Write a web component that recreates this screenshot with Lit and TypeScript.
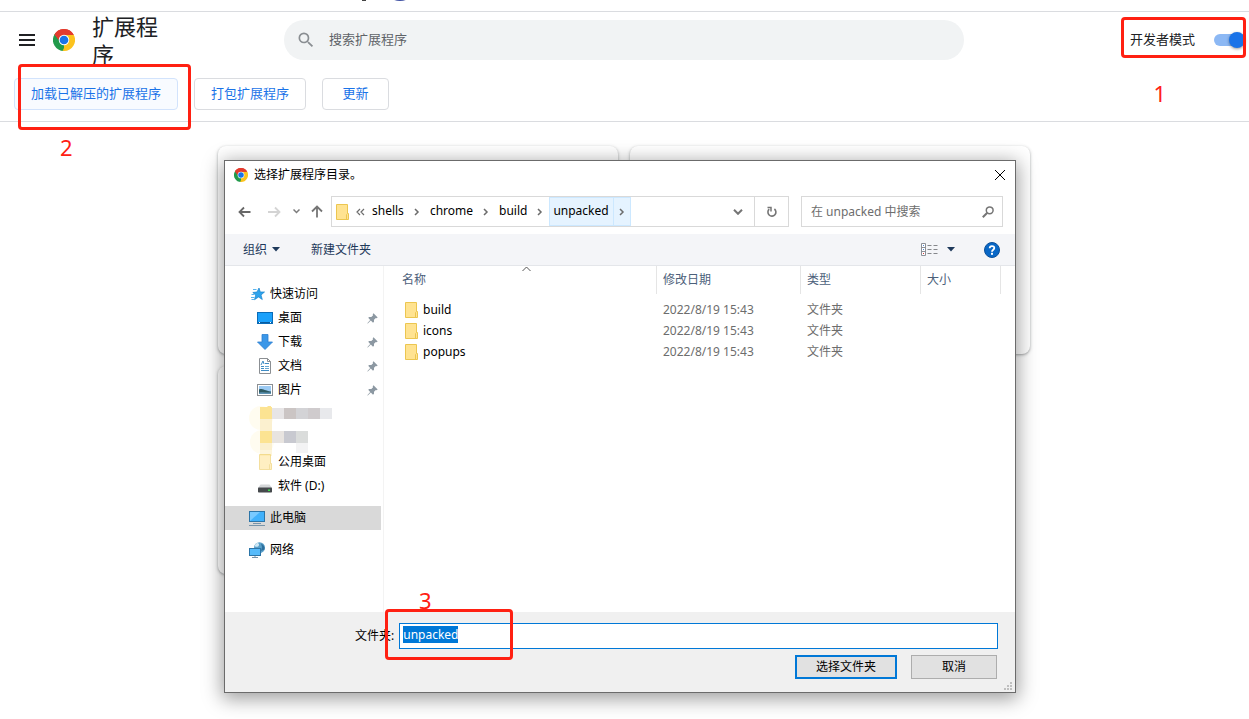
import { LitElement, html, css, svg } from "lit";
import { customElement, property, query } from "lit/decorators.js";
import { classMap } from "lit/directives/class-map.js";

const chromeLogo = (size: number) => html`
  <svg class="logo" width=${size} height=${size} viewBox="0 0 48 48" aria-hidden="true">
    <path d="M24 24 3.2 12A24 24 0 0 1 44.8 12Z" fill="#e33b2e" />
    <path d="M24 24 44.8 12A24 24 0 0 1 24 48Z" fill="#fcc31e" />
    <path d="M24 24 24 48A24 24 0 0 1 3.2 12Z" fill="#219a4b" />
    <path d="M24 13H44.8L46 16 34 27Z" fill="#fcc31e" />
    <path d="M3.2 12 14.5 29.5 24 24 15 13 6 8.500Z" fill="#219a4b" />
    <path d="M33.500 29.500 24 48 21 47.500 28 34Z" fill="#fcc31e" />
    <path d="M3.200 12A24 24 0 0 1 44.800 12L45.300 13H24L14.500 18.500 12 24Z" fill="#e33b2e" />
    <circle cx="24" cy="24" r="11.500" fill="#fff" />
    <circle cx="24" cy="24" r="9.500" fill="#1a73e8" />
  </svg>`;

const folder = (pale = false) => html`
  <svg width="13" height="16" viewBox="0 0 13 16" aria-hidden="true" opacity=${pale ? 0.55 : 1}>
    <path d="M.5.5H11.500V9.500H12.500V15.500H.5Z" fill="#ffe391" stroke="#ecc650" />
    <path d="M10.500 15V10.500L11.500 9.500" stroke="#ecc650" fill="none" />
  </svg>`;

const chevron = html`
  <svg width="6" height="8" viewBox="0 0 6 8" aria-hidden="true">
    <path d="M1 1 4 4 1 7" fill="none" stroke="#6c6c6c" stroke-width="1.500" />
  </svg>`;

const triangle = html`
  <svg width="8" height="5" viewBox="0 0 8 5" aria-hidden="true"><path d="M0 0H8L4 4.500Z" fill="#1e395b" /></svg>`;

const icons: Record<string, unknown> = {
  star: svg`<path d="M10 2 11.300 6 15.500 6 12 9 13.300 13.500 9.500 11 5.500 13.700 6.700 9.200 3.800 6.500 8 6Z" fill="#2ea3ec" stroke="#1583cd" stroke-width=".7"/><path d="M4 3.500H7.500M2.500 8.500H5M2 11.500H5.500M2.500 13.500H5" stroke="#58b4ef" stroke-width="1"/>`,
  desktop: svg`<rect x=".5" y="2.500" width="15" height="11" fill="#1ba1fb" stroke="#0a6cb8"/><path d="M1 12.500H15" stroke="#085b9f"/><path d="M2 12.500H3M13 12.500H14" stroke="#fff"/>`,
  download: svg`<path d="M5 .5H11V8H15.500L8 15.500.5 8H5Z" fill="#3b97e8" stroke="#2b7fd0" stroke-width=".8"/>`,
  document: svg`<path d="M2.500.5H10.500L13.500 3.500V15.500H2.500Z" fill="#fff" stroke="#8b8f93"/><path d="M10.500.5V3.500H13.500" fill="none" stroke="#8b8f93"/><path d="M4 7 6 3 7 6M8 5.500H12M4 8.500H7M4 10.500H7M4 12.500H12" fill="none" stroke="#3f8cc4"/><path d="M8 8.500H12M8 10.500H12" stroke="#68a8d2"/>`,
  picture: svg`<rect x=".5" y="2.500" width="15" height="11" fill="#fff" stroke="#8b8f93"/><rect x="2" y="4" width="12" height="8" fill="#9ccbf4"/><path d="M2 7.500C5 6 7 8.500 14 9.500V12H2Z" fill="#2f5b63"/><path d="M2 10.800C6 9.500 9 11 14 10.500V12H2Z" fill="#5e93b4"/>`,
  drive: svg`<path d="M3.500 6.500H12.500L15 10H1Z" fill="#d4d6d8"/><rect x="1" y="9.500" width="14" height="5" rx=".8" fill="#45494c"/><rect x="11" y="11.500" width="2" height="1.500" fill="#39e04d"/>`,
  computer: svg`<rect x=".5" y="1.500" width="15" height="10" fill="#41b1fb" stroke="#2c75a8"/><path d="M1 11 11 2H1Z" fill="#79caff"/><path d="M4 13.500H12M0 15.500H16" stroke="#7794aa"/>`,
  network: svg`<circle cx="10.500" cy="5.700" r="5.500" fill="#5aa0c9"/><path d="M8 1C10 1 11 3 9 4.500 7 5.500 6 4 5.500 4 6 2.500 7 1.500 8 1Z" fill="#cfe8f5"/><path d="M12 1.500C15 3 16 5 15.500 7.500L12 9 13 5Z" fill="#2d6f9d"/><rect x=".5" y="6.500" width="11" height="7" fill="#56bbfb" stroke="#2c75a8"/><path d="M3 15.500H9M6 14V15" stroke="#7794aa"/>`,
};

interface Place {
  label: string;
  icon: string;
  root?: boolean;
  pinned?: boolean;
  selected?: boolean;
}

const quickPlaces: Place[] = [
  { label: "快速访问", icon: "star", root: true },
  { label: "桌面", icon: "desktop", pinned: true },
  { label: "下载", icon: "download", pinned: true },
  { label: "文档", icon: "document", pinned: true },
  { label: "图片", icon: "picture", pinned: true },
];

const otherPlaces: Place[] = [
  { label: "公用桌面", icon: "folder" },
  { label: "软件 (D:)", icon: "drive" },
  { label: "此电脑", icon: "computer", root: true, selected: true },
  { label: "网络", icon: "network", root: true },
];

const base = css`
  * {
    box-sizing: border-box;
  }
  button,
  input {
    font: inherit;
    color: inherit;
    margin: 0;
    outline: none;
  }
  button {
    padding: 0;
    border: 0;
    background: none;
    white-space: nowrap;
  }
  svg {
    display: block;
    flex: none;
  }
`;

@customElement("folder-picker")
export class FolderPicker extends LitElement {
  @property({ type: Array }) path = ["shells", "chrome", "build", "unpacked"];
  @property({ type: Array }) folders = ["build", "icons", "popups"];
  @query("#folder") folderInput!: HTMLInputElement;

  static styles = [
    base,
    css`
      :host {
        display: flex;
        flex-direction: column;
        border: 1px solid #6b6b6b;
        background: #fff;
        box-shadow: 0 4px 18px 2px rgba(0, 0, 0, 0.38);
        font-size: 12px;
        line-height: 16px;
        color: #000;
      }
      .title-bar {
        display: flex;
        align-items: center;
        gap: 6px;
        height: 28px;
        padding: 0 10px 0 9px;
      }
      .title {
        flex: 1;
        font: inherit;
        margin: 0;
      }
      .nav {
        display: flex;
        gap: 12px;
        padding: 7px 12px 7px 13px;
      }
      .arrows {
        display: flex;
        align-items: center;
        gap: 11px;
        width: 81px;
      }
      .address {
        flex: 1;
        display: flex;
        height: 31px;
        border: 1px solid #d9d9d9;
      }
      .location {
        display: flex;
        align-items: center;
        flex: 1;
        padding-left: 4px;
      }
      .more {
        width: 19px;
        padding-left: 7px;
      }
      .crumb {
        display: flex;
        height: 29px;
      }
      .crumb button {
        display: flex;
        align-items: center;
        padding: 0 4px 2px;
      }
      .crumb .next {
        width: 18px;
        padding: 0;
        justify-content: center;
      }
      .crumb.current {
        background: #e5f3ff;
        box-shadow: inset 0 0 0 1px #cce8ff;
      }
      .crumb.current .next {
        border-left: 1px solid #cce8ff;
      }
      .drop {
        display: flex;
        margin-left: auto;
        padding: 0 11px;
      }
      .refresh {
        display: flex;
        align-items: center;
        justify-content: center;
        width: 34px;
        border-left: 1px solid #d9d9d9;
      }
      .search {
        display: flex;
        align-items: center;
        width: 202px;
        padding: 0 8px 0 9px;
        border: 1px solid #d9d9d9;
      }
      .search input {
        flex: 1;
        min-width: 0;
        border: 0;
        padding: 0;
        background: none;
      }
      .search input::placeholder {
        color: #6d6d6d;
        opacity: 1;
      }
      .commands {
        display: flex;
        align-items: center;
        height: 32px;
        padding: 0 15px 0 18px;
        background: #f4f5f8;
        border-bottom: 1px solid #e4e6ea;
        color: #1e395b;
      }
      .commands button {
        display: flex;
        align-items: center;
        gap: 5px;
      }
      .commands .create {
        margin-left: 31px;
      }
      .commands .view {
        margin-left: auto;
        gap: 9px;
      }
      .commands .help {
        margin-left: 29px;
      }
      .content {
        display: flex;
        flex: 1;
      }
      .places {
        width: 159px;
        padding: 16px 2px 0 0;
        border-right: 1px solid #f3f3f3;
      }
      .place {
        display: flex;
        align-items: center;
        gap: 5px;
        width: 100%;
        height: 24px;
        padding: 0 3px 0 32px;
      }
      .place.root {
        padding-left: 24px;
      }
      .place.selected {
        background: #d9d9d9;
      }
      .place.spaced {
        margin-top: 8px;
      }
      .place .icon {
        display: flex;
        justify-content: center;
        width: 16px;
      }
      .place .pin {
        margin-left: auto;
      }
      .hidden-places {
        height: 48px;
        padding-left: 24px;
      }
      .hidden-places svg {
        overflow: visible;
      }
      .files {
        flex: 1;
      }
      table {
        width: 100%;
        border-collapse: separate;
        border-spacing: 0;
        table-layout: fixed;
      }
      th {
        position: relative;
        height: 28px;
        padding: 0 0 0 6px;
        border-right: 1px solid #e5e5e5;
        font-weight: 400;
        text-align: left;
        color: #4c607a;
      }
      th:first-child {
        padding-left: 18px;
      }
      th:last-child {
        border: 0;
      }
      .sort {
        position: absolute;
        top: 0;
        right: 125px;
      }
      .name-col {
        width: 273px;
      }
      .date-col {
        width: 144px;
      }
      .type-col {
        width: 120px;
      }
      .size-col {
        width: 80px;
      }
      tbody::before {
        content: "";
        display: block;
        height: 5px;
      }
      td {
        height: 21px;
        padding: 0 0 0 6px;
        color: #6d6d6d;
      }
      td.name {
        padding-left: 21px;
        color: #000;
      }
      .entry {
        display: flex;
        align-items: center;
        gap: 5px;
      }
      .footer {
        position: relative;
        display: flex;
        flex-direction: column;
        gap: 6px;
        height: 80px;
        padding: 11px 17px 0 130px;
        background: #f0f0f0;
      }
      .field {
        display: flex;
        align-items: center;
        gap: 5px;
      }
      .field input {
        flex: 1;
        min-width: 0;
        height: 26px;
        padding: 0 3px 3px;
        border: 1px solid #0078d7;
        background: #fff;
      }
      .field input::selection {
        background: #0078d7;
        color: #fff;
      }
      .actions {
        display: flex;
        justify-content: flex-end;
        gap: 14px;
        padding-right: 1px;
      }
      .actions button {
        width: 86px;
        height: 24px;
        border: 1px solid #adadad;
        background: #e1e1e1;
      }
      .actions .primary {
        width: 102px;
        border: 2px solid #0078d7;
      }
      .grip {
        position: absolute;
        right: 3px;
        bottom: 2px;
      }
    `,
  ];

  firstUpdated() {
    this.folderInput.focus({ preventScroll: true });
    this.folderInput.select();
  }

  private renderPlace(place: Place, spaced = false) {
    return html`
      <button class=${classMap({ place: true, root: !!place.root, selected: !!place.selected, spaced })}>
        <span class="icon">
          ${place.icon === "folder"
            ? folder(true)
            : html`<svg width="16" height="16" viewBox="0 0 16 16" aria-hidden="true">${icons[place.icon]}</svg>`}
        </span>
        <span>${place.label}</span>
        ${place.pinned
          ? html`<svg class="pin" width="11" height="11" viewBox="0 0 11 11" aria-hidden="true">
              <path d="M6.500.3 10.700 4.500 9.500 5.300 8.800 5 7 6.800 7 8.800 6 9.700 3.800 7.500.8 10.500.3 10.200 3.200 7 1.200 4.800 2.200 4 4.300 4 6.100 2.200 5.700 1.300Z" fill="#8c98a2" />
            </svg>`
          : null}
      </button>`;
  }

  render() {
    const last = this.path.length - 1;
    return html`
      <div class="title-bar">
        ${chromeLogo(14)}
        <h2 class="title">选择扩展程序目录。</h2>
        <button aria-label="关闭">
          <svg width="10" height="10" viewBox="0 0 10 10"><path d="M0 0 10 10M10 0 0 10" stroke="#000" fill="none" /></svg>
        </button>
      </div>

      <div class="nav">
        <div class="arrows">
          <button aria-label="后退">
            <svg width="13" height="12" viewBox="0 0 13 12"><path d="M12.500 6H1.500M6 1.500 1.500 6 6 10.500" stroke="#686868" stroke-width="1.800" fill="none" /></svg>
          </button>
          <button aria-label="前进">
            <svg width="20" height="12" viewBox="-6 0 20 12"><path d="M0 6H11.500M7 1.500 11.500 6 7 10.500" stroke="#d4d4d4" stroke-width="1.800" fill="none" /></svg>
          </button>
          <button aria-label="最近位置">
            <svg width="7" height="5" viewBox="0 0 7 5"><path d="M.5.5 3.500 3.500 6.500.5" stroke="#7c7c7c" stroke-width="1.500" fill="none" /></svg>
          </button>
          <button aria-label="向上">
            <svg width="12" height="13" viewBox="0 0 12 13"><path d="M6 12.500V1.500M1 6.500 6 1.500 11 6.500" stroke="#757575" stroke-width="1.800" fill="none" /></svg>
          </button>
        </div>
        <div class="address">
          <div class="location">
            ${folder()}
            <span class="more">
              <svg width="9" height="8" viewBox="0 0 9 8" aria-hidden="true"><path d="M4 1 1 4 4 7M8 1 5 4 8 7" stroke="#6c6c6c" stroke-width="1.200" fill="none" /></svg>
            </span>
            ${this.path.map(
              (part, i) => html`
                <span class=${classMap({ crumb: true, current: i === last })}>
                  <button>${part}</button>
                  <button class="next" aria-label="展开">${chevron}</button>
                </span>`
            )}
            <button class="drop" aria-label="历史记录">
              <svg width="10" height="6" viewBox="0 0 10 6"><path d="M1 .800 5 4.800 9 .800" stroke="#757575" stroke-width="2" fill="none" /></svg>
            </button>
          </div>
          <button class="refresh" aria-label="刷新">
            <svg width="12" height="12" viewBox="0 0 12 12">
              <path d="M8.400 3A4 4 0 1 1 3.200 3.200" stroke="#757575" stroke-width="1.600" fill="none" />
              <path d="M1.500 1.500H5V5.500" stroke="#757575" stroke-width="1.500" fill="none" />
            </svg>
          </button>
        </div>
        <div class="search">
          <input type="text" aria-label="搜索" placeholder="在 unpacked 中搜索" />
          <svg width="12" height="12" viewBox="0 0 12 12" aria-hidden="true">
            <circle cx="7.700" cy="4.300" r="3.400" stroke="#757575" stroke-width="1.500" fill="none" />
            <path d="M5.300 6.700.8 11.200" stroke="#757575" stroke-width="2" />
          </svg>
        </div>
      </div>

      <div class="commands">
        <button>组织 ${triangle}</button>
        <button class="create">新建文件夹</button>
        <button class="view" aria-label="更改视图">
          <svg width="17" height="13" viewBox="0 0 17 13">
            <path d="M.5.5H4.500V12.500H.5ZM.5 4.500H4.500M.5 8.500H4.500" fill="#fff" stroke="#8b8f96" />
            <path d="M6.500 2.500H10.500M12.500 2.500H16.500M6.500 6.500H10.500M12.500 6.500H16.500M6.500 10.500H10.500M12.500 10.500H16.500" stroke="#85878b" />
            <path d="M2 2.500H3M2 6.500H3" stroke="#4f88d9" /><path d="M2 10.500H3" stroke="#d43c3c" />
          </svg>
          ${triangle}
        </button>
        <button class="help" aria-label="帮助">
          <svg width="16" height="16" viewBox="0 0 16 16">
            <circle cx="8" cy="8" r="7.500" fill="#0867c6" stroke="#0b4f99" />
            <path d="M5.700 6.200C5.700 3.400 10.300 3.400 10.300 6.100 10.300 7.700 8 7.700 8 9.700" fill="none" stroke="#fff" stroke-width="1.800" />
            <rect x="7" y="10.800" width="2" height="2" fill="#fff" />
          </svg>
        </button>
      </div>

      <div class="content">
        <nav class="places">
          ${quickPlaces.map((p) => this.renderPlace(p))}
          <div class="hidden-places">
            <svg width="84" height="48" viewBox="0 0 84 48" aria-hidden="true">
              <circle cx="12" cy="16" r="12" fill="#fffcf0" />
              <circle cx="13" cy="40" r="12" fill="#fffcf0" />
              <rect x="11" y="24" width="12" height="24" fill="#fbf0cf" />
              <rect x="11" y="48" width="12" height="6" fill="#fdf5dc" />
              <path d="M11 5H18L19 4H22V5H23V17H11ZM11 29H23V41H11Z" fill="#fce392" />
              <rect x="11" y="17" width="12" height="12" fill="#fbf0cf" />
              <rect x="23" y="6" width="12" height="11" fill="#e7e5e6" />
              <rect x="35" y="6" width="12" height="11" fill="#cbc5c4" />
              <rect x="47" y="6" width="12" height="11" fill="#d3d3d6" />
              <rect x="59" y="6" width="12" height="11" fill="#cfcbcd" />
              <rect x="71" y="6" width="12" height="11" fill="#e8e9ec" />
              <rect x="23" y="29" width="12" height="12" fill="#e8e4e0" />
              <rect x="35" y="29" width="12" height="12" fill="#c8c9d0" />
              <rect x="47" y="29" width="12" height="12" fill="#dadcdb" />
              <rect x="47" y="41" width="12" height="10" fill="#f3f3f4" />
            </svg>
          </div>
          ${otherPlaces.map((p) => this.renderPlace(p, p.root))}
        </nav>
        <div class="files">
          <table>
            <colgroup>
              <col class="name-col" /><col class="date-col" /><col class="type-col" /><col class="size-col" /><col />
            </colgroup>
            <thead>
              <tr>
                <th>
                  名称
                  <svg class="sort" width="9" height="6" viewBox="0 0 9 6" aria-hidden="true"><path d="M.5 5 4.500 1 8.500 5" stroke="#555" fill="none" /></svg>
                </th>
                <th>修改日期</th>
                <th>类型</th>
                <th>大小</th>
                <th></th>
              </tr>
            </thead>
            <tbody>
              ${this.folders.map(
                (name) => html`
                  <tr>
                    <td class="name"><span class="entry">${folder()}<span>${name}</span></span></td>
                    <td>2022/8/19 15:43</td>
                    <td>文件夹</td>
                    <td></td>
                    <td></td>
                  </tr>`
              )}
            </tbody>
          </table>
        </div>
      </div>

      <div class="footer">
        <div class="field">
          <label for="folder">文件夹:</label>
          <input id="folder" type="text" value="unpacked" spellcheck="false" />
        </div>
        <div class="actions">
          <button class="primary">选择文件夹</button>
          <button>取消</button>
        </div>
        <svg class="grip" width="8" height="8" viewBox="0 0 8 8" aria-hidden="true">
          <path d="M6 0H8V2H6ZM3 3H5V5H3ZM6 3H8V5H6ZM0 6H2V8H0ZM3 6H5V8H3ZM6 6H8V8H6Z" fill="#bfbfbf" />
        </svg>
      </div>
    `;
  }
}

@customElement("app-root")
export class AppRoot extends LitElement {
  static styles = [
    base,
    css`
      :host {
        display: block;
        position: relative;
        min-height: 100vh;
        overflow: hidden;
        background: #fff;
        font-family: "Noto Sans", "Noto Sans CJK SC", sans-serif;
        font-size: 13px;
        line-height: 20px;
        color: #202124;
      }
      .browser-edge {
        height: 12px;
        padding-left: 361px;
        border-bottom: 1px solid #dadce0;
      }
      .toolbar {
        display: grid;
        grid-template-columns: 1fr minmax(0, 680px) 1fr;
        align-items: center;
        height: 56px;
        padding-right: 1px;
      }
      .brand {
        display: flex;
        align-items: center;
        padding-left: 19px;
      }
      .brand .logo {
        margin: 0 17px 0 18px;
      }
      h1 {
        width: 68px;
        margin: 0;
        font-size: 22px;
        line-height: 28px;
        font-weight: 400;
      }
      .search {
        display: flex;
        align-items: center;
        gap: 13px;
        height: 40px;
        padding: 0 12px;
        border-radius: 20px;
        background: #f1f3f4;
      }
      .search input {
        flex: 1;
        min-width: 0;
        border: 0;
        padding: 0 0 2px;
        background: none;
      }
      .search input::placeholder {
        color: #5f6368;
        opacity: 1;
      }
      .developer {
        display: flex;
        align-items: center;
        justify-content: flex-end;
        gap: 19px;
        padding-right: 4px;
      }
      .developer label {
        padding-bottom: 2px;
      }
      .developer input {
        appearance: none;
        position: relative;
        width: 30px;
        height: 12px;
        border-radius: 6px;
        background: #8cb8f4;
      }
      .developer input::before {
        content: "";
        position: absolute;
        top: -2px;
        right: -1px;
        width: 16px;
        height: 16px;
        border-radius: 8px;
        background: #1a73e8;
        box-shadow: 0 1px 3px rgba(0, 0, 0, 0.4);
      }
      .tools {
        display: flex;
        gap: 16px;
        padding: 10px 14px 11px;
        border-bottom: 1px solid #dadce0;
      }
      .tools button {
        min-width: 67px;
        height: 32px;
        padding: 0 16px 2px;
        border: 1px solid #dadce0;
        border-radius: 4px;
        color: #1a73e8;
      }
      .tools .active {
        border-color: #d2e3fc;
        background: #f8fbff;
      }
      .cards {
        display: grid;
        grid-template-columns: repeat(2, 400px);
        grid-auto-rows: 208px;
        gap: 12px;
        justify-content: center;
        padding: 24px 1px 0 0;
      }
      .card {
        border-radius: 8px;
        background: #fff;
        box-shadow: 0 1px 2px rgba(60, 64, 67, 0.3), 0 1px 3px 1px rgba(60, 64, 67, 0.15);
      }
      folder-picker {
        position: absolute;
        left: 224px;
        top: 160px;
        width: 792px;
        height: 533px;
      }
      .mark {
        position: absolute;
        border: 3px solid #ff2012;
        border-radius: 4px;
        pointer-events: none;
      }
      .step {
        position: absolute;
        font-size: 22px;
        line-height: 24px;
        color: #ff2012;
      }
      .mark-1 {
        right: 3px;
        top: 17px;
        width: 125px;
        height: 41px;
      }
      .step-1 {
        right: 83px;
        top: 81px;
      }
      .mark-2 {
        left: 18px;
        top: 64px;
        width: 173px;
        height: 66px;
      }
      .step-2 {
        left: 60px;
        top: 135px;
      }
      .mark-3 {
        left: 385px;
        top: 609px;
        width: 128px;
        height: 51px;
      }
      .step-3 {
        left: 419px;
        top: 588px;
      }
    `,
  ];

  render() {
    return html`
      <div class="browser-edge">
        <svg width="48" height="2" viewBox="0 0 48 2" aria-hidden="true">
          <rect x="1" width="4" height="1" fill="#444" />
          <ellipse cx="39" cy="-2" rx="8" ry="3" fill="#3f51a3" />
        </svg>
      </div>
      <header class="toolbar">
        <div class="brand">
          <button aria-label="主菜单">
            <svg width="16" height="12" viewBox="0 0 16 12"><path d="M0 1H16M0 6H16M0 11H16" stroke="#202124" stroke-width="2" /></svg>
          </button>
          ${chromeLogo(22)}
          <h1>扩展程序</h1>
        </div>
        <div class="search">
          <svg width="20" height="20" viewBox="0 0 24 24" aria-hidden="true">
            <path fill="#8a8e92" d="M15.500 14h-.79l-.28-.27A6.470 6.470 0 0 0 16 9.500 6.500 6.500 0 1 0 9.500 16c1.610 0 3.090-.59 4.230-1.570l.27.28v.79l5 4.990L20.490 19l-4.990-5zm-6 0C7.010 14 5 11.990 5 9.500S7.010 5 9.500 5 14 7.010 14 9.500 11.990 14 9.500 14z" />
          </svg>
          <input type="text" aria-label="搜索扩展程序" placeholder="搜索扩展程序" />
        </div>
        <div class="developer">
          <label for="dev-mode">开发者模式</label>
          <input id="dev-mode" type="checkbox" role="switch" checked />
        </div>
      </header>
      <div class="tools">
        <button class="active">加载已解压的扩展程序</button>
        <button>打包扩展程序</button>
        <button>更新</button>
      </div>
      <main class="cards">
        <div class="card"></div>
        <div class="card"></div>
        <div class="card"></div>
      </main>

      <folder-picker role="dialog" aria-label="选择扩展程序目录"></folder-picker>

      <div class="mark mark-1"></div>
      <span class="step step-1">1</span>
      <div class="mark mark-2"></div>
      <span class="step step-2">2</span>
      <div class="mark mark-3"></div>
      <span class="step step-3">3</span>
    `;
  }
}
